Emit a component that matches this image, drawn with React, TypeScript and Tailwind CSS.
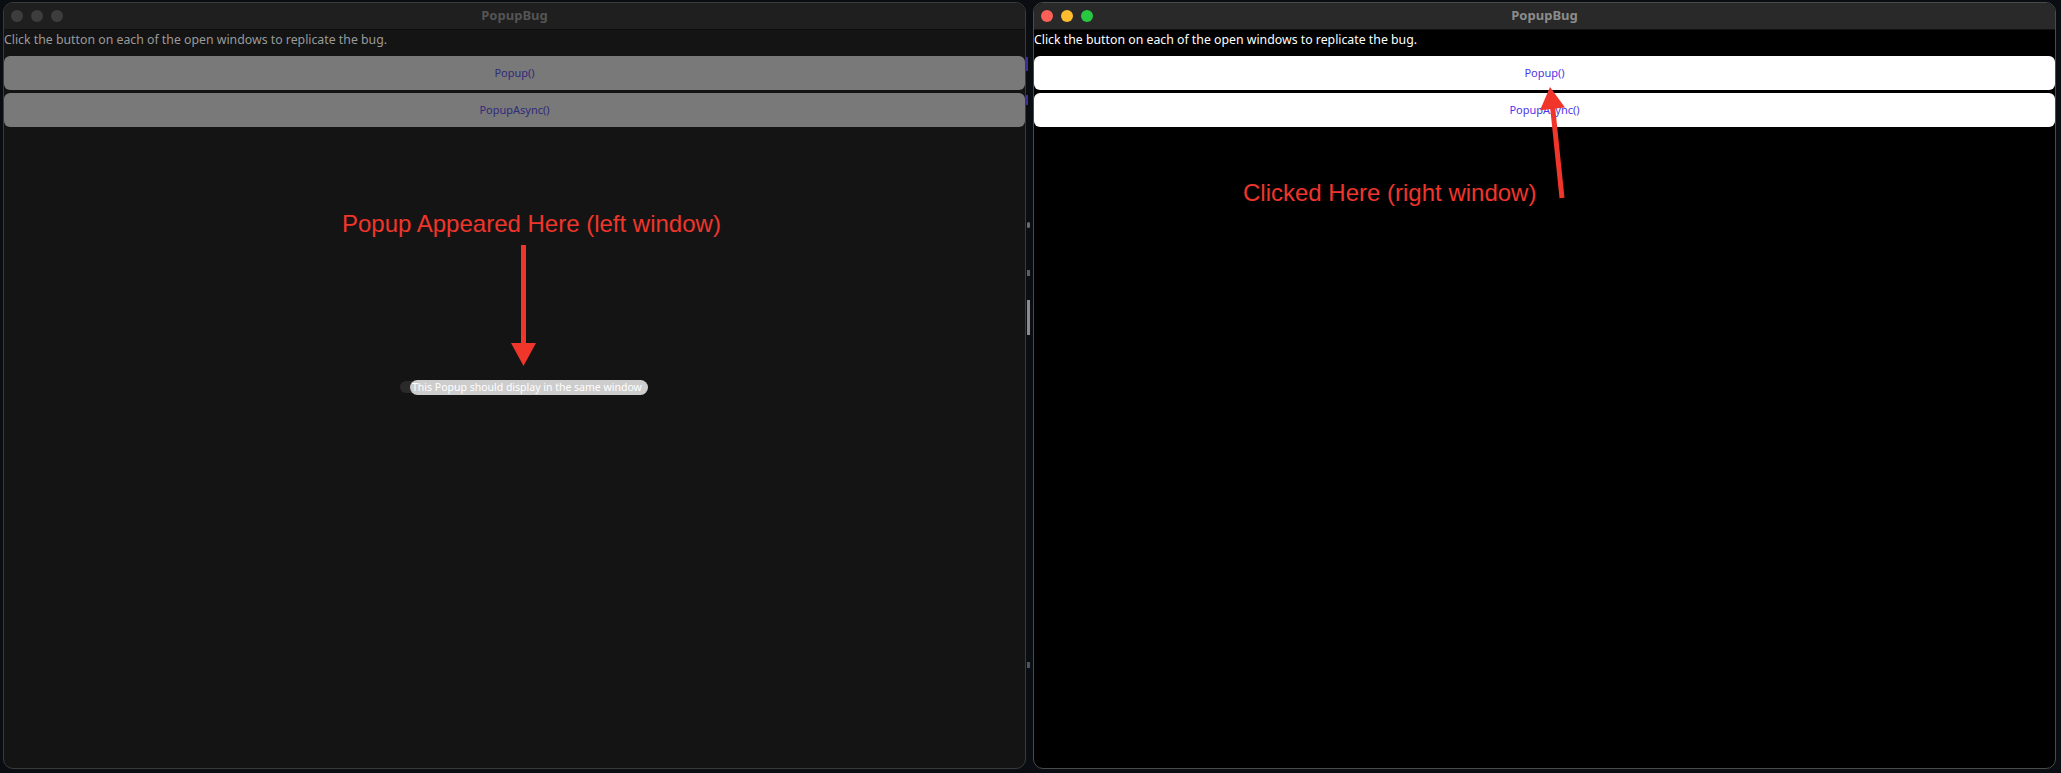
import React from 'react';

type WinProps = {
  active: boolean;
  children?: React.ReactNode;
};

const uiFont = { fontFamily: '"Noto Sans", "Open Sans", sans-serif' };

const Window = ({ active, children }: WinProps) => {
  return (
    <div
      className={`relative flex flex-col w-[1023px] h-[767px] rounded-[10px] overflow-hidden border ${
        active ? 'border-[#4a4a4a] bg-black' : 'border-[#3a3a3a] bg-[#141414]'
      }`}
      style={uiFont}
    >
      {/* Title bar */}
      <div
        className={`relative flex items-center h-[27px] shrink-0 border-b ${
          active ? 'bg-[#292929] border-b-[#111]' : 'bg-[#1f1f1f] border-b-[#0e0e0e]'
        }`}
      >
        <div className="flex items-center gap-[8px] pl-[7px]">
          <span className={`w-[12px] h-[12px] rounded-full ${active ? 'bg-[#fe5f57]' : 'bg-[#3d3d3d]'}`} />
          <span className={`w-[12px] h-[12px] rounded-full ${active ? 'bg-[#febc2e]' : 'bg-[#3d3d3d]'}`} />
          <span className={`w-[12px] h-[12px] rounded-full ${active ? 'bg-[#28c840]' : 'bg-[#3d3d3d]'}`} />
        </div>
        <div
          className={`absolute inset-0 flex items-center justify-center text-[13px] font-bold ${
            active ? 'text-[#8c8c8c]' : 'text-[#545454]'
          }`}
        >
          PopupBug
        </div>
      </div>

      {/* Content */}
      <div className="flex flex-col">
        <div
          className={`h-[20px] leading-[20px] text-[12.3px] ${
            active ? 'text-white' : 'text-[#9a9a9a]'
          }`}
        >
          Click the button on each of the open windows to replicate the bug.
        </div>
        <div className="flex flex-col gap-[3px] mt-[6px]">
          {['Popup()', 'PopupAsync()'].map((label) => (
            <button
              key={label}
              className={`h-[34px] rounded-[6px] text-[11px] ${
                active ? 'bg-white text-[#4b36e6]' : 'bg-[#797979] text-[#2f2a7a]'
              }`}
            >
              {label}
            </button>
          ))}
        </div>
      </div>
      {children}
    </div>
  );
};

export default function App() {
  return (
    <div className="relative w-[2061px] h-[773px] overflow-hidden bg-[#0a0d12]">
      <div className="flex pt-[2px] pl-[3px]">
        <Window active={false}>
          {/* popup shown in the wrong window */}
          <div className="absolute left-[396px] top-[378px] w-[14px] h-[12px] rounded-l-full bg-[#2a2a2a]" />
          <div
            className="absolute left-[406px] top-[377px] w-[238px] h-[15px] rounded-full bg-[#cdcdcd] text-white text-[10.5px] leading-[15px] whitespace-nowrap pl-[2px]"
          >
            This Popup should display in the same window
          </div>
        </Window>

        {/* sliver of a window behind */}
        <div className="relative w-[7px] h-[767px]">
          <div className="absolute left-0 top-[55px] w-[2px] h-[14px] bg-[#3c2f9a]" />
          <div className="absolute left-0 top-[93px] w-[2px] h-[10px] bg-[#3c2f9a]" />
          <div className="absolute left-[1px] top-[220px] w-[3px] h-[6px] rounded-full bg-[#6b6b6b]" />
          <div className="absolute left-[1px] top-[268px] w-[3px] h-[6px] bg-[#5e5e5e]" />
          <div className="absolute left-[1px] top-[298px] w-[3px] h-[35px] bg-[#8a8a8a]" />
          <div className="absolute left-[1px] top-[660px] w-[3px] h-[6px] bg-[#4a5563]" />
        </div>

        <Window active={true} />
      </div>

      {/* Annotations */}
      <div
        className="absolute left-[342px] top-[212px] text-[24px] leading-[24px] text-[#f0352b] whitespace-nowrap"
        style={{ fontFamily: '"Liberation Sans", Arial, sans-serif' }}
      >
        Popup Appeared Here (left window)
      </div>
      <div
        className="absolute left-[1243px] top-[181px] text-[24px] leading-[24px] text-[#f0352b] whitespace-nowrap"
        style={{ fontFamily: '"Liberation Sans", Arial, sans-serif' }}
      >
        Clicked Here (right window)
      </div>

      <svg
        className="absolute inset-0 pointer-events-none"
        width="2061"
        height="773"
        viewBox="0 0 2061 773"
      >
        <line x1="523.5" y1="245" x2="523.5" y2="346" stroke="#f0352b" strokeWidth="5" />
        <polygon points="511,343 536,343 523.5,366" fill="#f0352b" />
        <line x1="1562" y1="198" x2="1552.5" y2="106" stroke="#f0352b" strokeWidth="5" />
        <polygon points="1565,107.6 1540,110.2 1550,87" fill="#f0352b" />
      </svg>
    </div>
  );
}
